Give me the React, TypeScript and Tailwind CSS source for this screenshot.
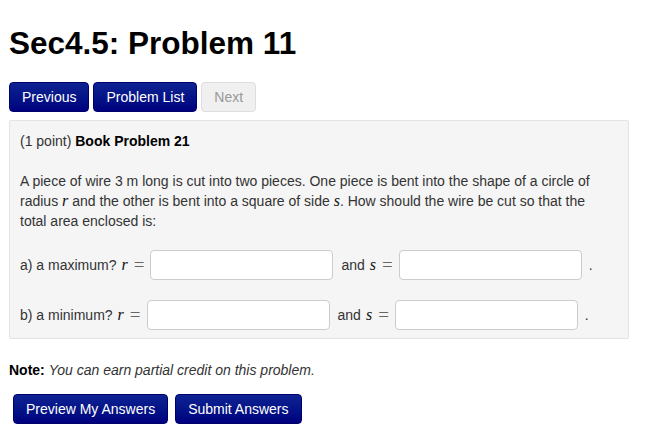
import React from "react";

const font = { fontFamily: '"Liberation Sans", Arial, sans-serif' };

function Btn({ children }: { children: React.ReactNode }) {
  return (
    <button className="h-[30px] px-[12px] rounded-[4px] border border-[#00006a] bg-gradient-to-b from-[#0f2292] to-[#00007e] text-white text-[14px] leading-[20px]">
      {children}
    </button>
  );
}

function MathVar({ v }: { v: string }) {
  return (
    <span className="italic text-[16px] leading-[16px] text-[#111]" style={{ fontFamily: '"Liberation Serif", "Times New Roman", serif' }}>
      {v}
    </span>
  );
}

function Eq() {
  return (
    <span className="text-[19px] text-[#666] leading-[20px]" style={{ fontFamily: '"Liberation Serif", "Times New Roman", serif' }}>
      =
    </span>
  );
}

function Input() {
  return <input className="h-[30px] w-[183px] rounded-[4px] border border-[#cccccc] bg-white" />;
}

function Row({ label }: { label: string }) {
  return (
    <div className="flex items-center h-[30px]">
      <span>{label}</span>
      <span className="ml-[5px]"><MathVar v="r" /></span>
      <span className="ml-[6px]"><Eq /></span>
      <span className="ml-[6px]"><Input /></span>
      <span className="ml-[8px]">and</span>
      <span className="ml-[5px]"><MathVar v="s" /></span>
      <span className="ml-[6px]"><Eq /></span>
      <span className="ml-[6px]"><Input /></span>
      <span className="ml-[7px]">.</span>
    </div>
  );
}

export default function App() {
  return (
    <div className="bg-white min-h-[436px] pl-[9px] text-[#333] text-[14px] leading-[20px]" style={font}>
      <h1 className="pt-[25px] text-[31.5px] leading-[36px] font-bold text-black">Sec4.5: Problem 11</h1>
      <div className="mt-[21px] flex gap-[4px]">
        <Btn>Previous</Btn>
        <Btn>Problem List</Btn>
        <button className="h-[30px] px-[12px] rounded-[4px] border border-[#dddddd] bg-[#f0f0f0] text-[#999] text-[14px] leading-[20px]">
          Next
        </button>
      </div>
      <div className="mt-[8px] w-[620px] border border-[#e3e3e3] bg-[#f5f5f5] rounded-[2px] px-[10px] pt-[10px] pb-[8px]">
        <div>
          (1 point) <b className="text-black">Book Problem 21</b>
        </div>
        <p className="mt-[20px] w-[580px]">
          A piece of wire 3 m long is cut into two pieces. One piece is bent into the shape of a circle of radius <MathVar v="r" /> and the other is bent into a square of side <MathVar v="s" />. How should the wire be cut so that the total area enclosed is:
        </p>
        <div className="mt-[19px]">
          <Row label="a) a maximum?" />
        </div>
        <div className="mt-[20px]">
          <Row label="b) a minimum?" />
        </div>
      </div>
      <div className="mt-[21px]">
        <b className="text-black">Note:</b> <i>You can earn partial credit on this problem.</i>
      </div>
      <div className="mt-[14px] ml-[4px] flex gap-[7px]">
        <Btn>Preview My Answers</Btn>
        <Btn>Submit Answers</Btn>
      </div>
    </div>
  );
}
